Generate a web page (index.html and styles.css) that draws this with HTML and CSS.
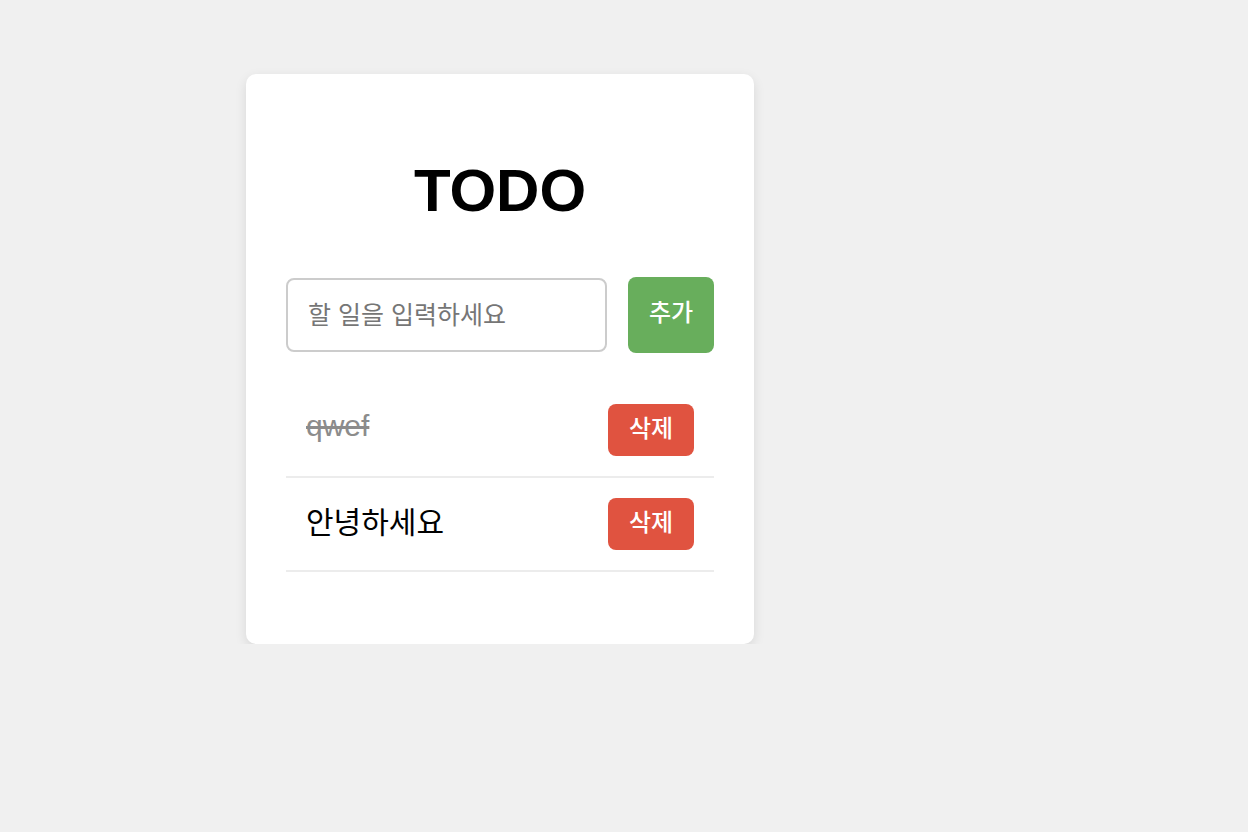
FILE: index.html
```html
<!DOCTYPE html>
<html lang="ko">
<head>
<meta charset="utf-8">
<title>TODO</title>
<link rel="stylesheet" href="styles.css">
</head>
<body>
  <div class="card">
    <h1 class="title">TODO</h1>
    <form class="add-form">
      <input class="add-input" type="text" placeholder="할 일을 입력하세요">
      <button class="add-btn" type="button">추가</button>
    </form>
    <ul class="todo-list">
      <li class="todo-item">
        <span class="todo-text done">qwef</span>
        <button class="del-btn" type="button">삭제</button>
      </li>
      <li class="todo-item">
        <span class="todo-text">안녕하세요</span>
        <button class="del-btn" type="button">삭제</button>
      </li>
    </ul>
  </div>
</body>
</html>
```

FILE: styles.css
```css
html, body {
  margin: 0;
  padding: 0;
  background: #f0f0f0;
}

body {
  font-family: "Liberation Sans", "Noto Sans CJK KR", sans-serif;
  padding: 74px 0 0 246px;
}

.card {
  box-sizing: border-box;
  width: 508px;
  background: #ffffff;
  border-radius: 10px;
  box-shadow: 0 4px 12px rgba(0, 0, 0, 0.1);
  padding: 40px 40px 40px;
}

.title {
  margin: 41px 0 50px;
  font-size: 60px;
  line-height: 72px;
  font-weight: 700;
  text-align: center;
  color: #000;
}

.add-form {
  display: flex;
  align-items: center;
  gap: 21px;
  margin: 0 0 31px;
}

.add-input {
  flex: 1;
  box-sizing: border-box;
  height: 74px;
  min-width: 0;
  border: 2px solid #cccccc;
  border-radius: 8px;
  padding: 0 20px;
  font-family: "Liberation Sans", "Noto Sans CJK KR", sans-serif;
  font-size: 25px;
  color: #000;
  outline: none;
}

.add-input::placeholder {
  color: #767676;
}

.add-btn {
  box-sizing: border-box;
  width: 86px;
  height: 76px;
  border: none;
  border-radius: 8px;
  background: #68ae5c;
  color: #ffffff;
  font-family: "Liberation Sans", "Noto Sans CJK KR", sans-serif;
  font-size: 24px;
  font-weight: 500;
  padding: 0 0 10px;
}

.todo-list {
  list-style: none;
  margin: 0 0 32px;
  padding: 0;
}

.todo-item {
  display: flex;
  align-items: center;
  justify-content: space-between;
  padding: 20px;
  border-bottom: 2px solid #ececec;
}

.todo-text {
  font-size: 30px;
  color: #000;
  margin-top: -8px;
}

.todo-text.done {
  color: #8c8c8c;
  text-decoration: line-through;
}

.del-btn {
  box-sizing: border-box;
  width: 86px;
  height: 52px;
  border: none;
  border-radius: 8px;
  background: #e05340;
  color: #ffffff;
  font-family: "Liberation Sans", "Noto Sans CJK KR", sans-serif;
  font-size: 24px;
  font-weight: 500;
  padding: 0 0 7px;
}
```
